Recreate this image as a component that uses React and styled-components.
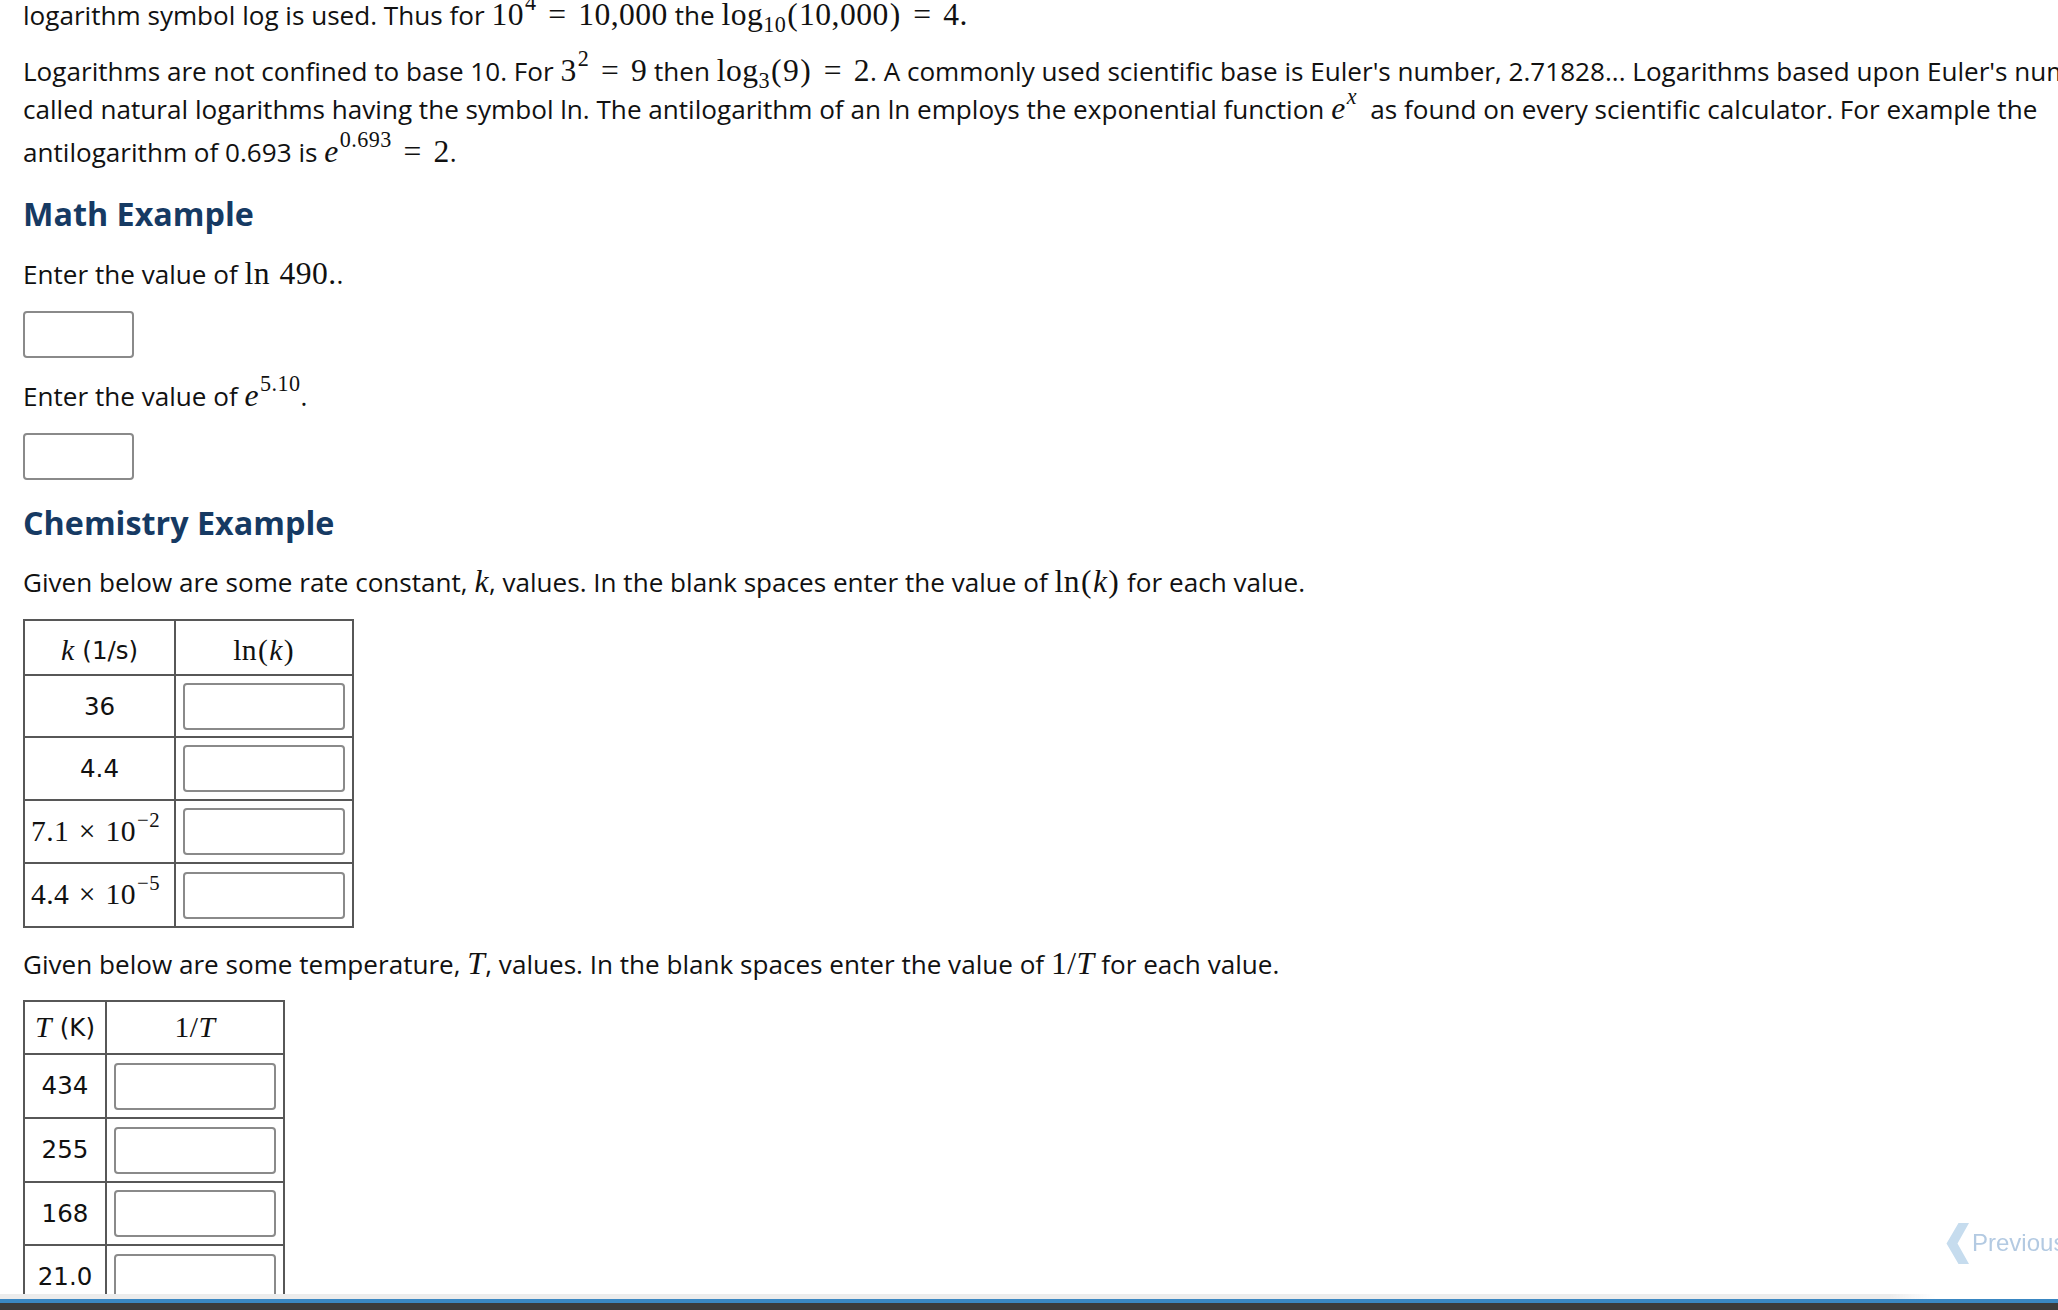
import React from "react";
import styled, { createGlobalStyle } from "styled-components";

const GlobalStyle = createGlobalStyle`
  html, body { margin: 0; padding: 0; overflow: hidden; background: #fff; }
  body { font-family: "Open Sans", "Noto Sans", sans-serif; color: #111; }
  *, *::before, *::after { box-sizing: border-box; }
`;

const Page = styled.main`
  width: 2400px;
  padding: 0 0 0 23px;
  font-size: 26.1px;
  line-height: 38.4px;
`;

const Para = styled.p`
  margin: ${(p) => (p.$first ? "-4px" : "0")} 0 17.5px;
  white-space: nowrap;
`;

const SectionTitle = styled.h2`
  margin: 23.5px 0 23px;
  font-size: 32.3px;
  line-height: 36.8px;
  font-weight: 700;
  color: #163a63;
`;

const M = styled.span`
  font-family: "Liberation Serif", "Times New Roman", serif;
  font-size: 1.21em;
  line-height: 1;
  letter-spacing: 0.015em;
  white-space: nowrap;
`;

const V = styled.i`
  font-style: italic;
`;

const Sup = styled.sup`
  font-size: 0.7em;
  line-height: ${(p) => (p.$grow ? 1 : 0)};
  vertical-align: 0.69em;
  margin-left: 0.05em;
`;

const Sub = styled.sub`
  font-size: 0.7em;
  line-height: 0;
  vertical-align: -0.32em;
`;

const Paren = styled.span`
  padding: 0 0.03em;
`;

const Rel = styled.span`
  margin: 0 0.37em;
`;

const Bin = styled.span`
  margin: 0 0.32em;
`;

const Gap = styled.span`
  display: inline-block;
  width: ${(p) => p.$w || "0.3em"};
`;

const AnswerInput = styled.input`
  display: block;
  width: ${(p) => p.$w || 111}px;
  height: 47px;
  margin: ${(p) => (p.$inCell ? "0" : "0 0 19.6px")};
  padding: 0 8px;
  border: 2px solid #8a8a8a;
  border-radius: 4px;
  background: #fff;
  font: inherit;
  font-size: 22px;
  outline: none;
`;

const Grid = styled.div`
  display: grid;
  grid-template-columns: ${(p) => p.$cols};
  grid-template-rows: ${(p) => p.$rows};
  width: max-content;
  margin: ${(p) => p.$mt || 0}px 0 ${(p) => p.$mb ?? 19.6}px;
  border-top: 2px solid #575757;
  border-left: 2px solid #575757;
  font-family: "DejaVu Sans", Verdana, sans-serif;
  font-size: 24.5px;
  line-height: 1.2;
  color: #111;
`;

const Cell = styled.div`
  display: flex;
  align-items: center;
  justify-content: ${(p) => (p.$left ? "flex-start" : "center")};
  padding: ${(p) => (p.$pt ? `${p.$pt}px 6px 0` : "0 6px")};
  border-right: 2px solid #575757;
  border-bottom: 2px solid #575757;
  white-space: nowrap;
`;

const BottomBar = styled.footer`
  position: fixed;
  left: 0;
  right: 0;
  bottom: 0;
  height: 16px;
  display: flex;
  flex-direction: column;
`;

const Shade = styled.div`
  height: 5px;
  background: linear-gradient(to right, #ececec 1890px, rgba(236, 236, 236, 0) 1935px);
`;

const Accent = styled.div`
  height: 4px;
  background: #3a87c2;
`;

const Base = styled.div`
  flex: 1;
  background: #3b3b3b;
`;

const PrevButton = styled.button`
  position: fixed;
  left: 1946px;
  top: 1223px;
  display: flex;
  align-items: center;
  gap: 2px;
  padding: 0;
  border: 0;
  background: none;
  font-family: "Liberation Sans", Arial, sans-serif;
  font-size: 24px;
  color: #b3cae2;
  white-space: nowrap;
  cursor: default;
`;

const Chevron = styled.svg`
  display: block;
  filter: blur(0.6px);
`;

const PrevLabel = styled.span`
  position: relative;
  top: -1px;
`;

const rateRows = [
  { k: "36" },
  { k: "4.4" },
  {
    k: (
      <M>
        7.1<Bin>×</Bin>10<Sup>−2</Sup>
      </M>
    ),
    left: true,
  },
  {
    k: (
      <M>
        4.4<Bin>×</Bin>10<Sup>−5</Sup>
      </M>
    ),
    left: true,
  },
];

const tempRows = ["434", "255", "168", "21.0"];

export default function App() {
  return (
    <>
      <GlobalStyle />
      <Page>
        <Para $first>
          logarithm symbol log is used. Thus for{" "}
          <M>
            10<Sup>4</Sup>
            <Rel>=</Rel>10,000
          </M>{" "}
          the{" "}
          <M>
            log<Sub>10</Sub>
            <Paren>(</Paren>10,000<Paren>)</Paren>
            <Rel>=</Rel>4.
          </M>
        </Para>

        <Para>
          Logarithms are not confined to base 10. For{" "}
          <M>
            3<Sup>2</Sup>
            <Rel>=</Rel>9
          </M>{" "}
          then{" "}
          <M>
            log<Sub>3</Sub>
            <Paren>(</Paren>9<Paren>)</Paren>
            <Rel>=</Rel>2
          </M>
          . A commonly used scientific base is Euler's number, 2.71828... Logarithms based upon Euler's number are
          <br />
          called natural logarithms having the symbol ln. The antilogarithm of an ln employs the exponential function{" "}
          <M>
            <V>e</V>
            <Sup>
              <V>x</V>
            </Sup>
          </M>
          <Gap $w="0.25em" /> as found on every scientific calculator. For example the
          <br />
          antilogarithm of 0.693 is{" "}
          <M>
            <V>e</V>
            <Sup $grow>0.693</Sup>
            <Rel>=</Rel>2
          </M>
          .
        </Para>

        <SectionTitle>Math Example</SectionTitle>

        <Para>
          Enter the value of{" "}
          <M>
            ln
            <Gap />
            490.
          </M>
          .
        </Para>
        <AnswerInput type="text" aria-label="ln 490" />

        <Para>
          Enter the value of{" "}
          <M>
            <V>e</V>
            <Sup>5.10</Sup>
          </M>
          .
        </Para>
        <AnswerInput type="text" aria-label="e^5.10" />

        <SectionTitle>Chemistry Example</SectionTitle>

        <Para>
          Given below are some rate constant,{" "}
          <M>
            <V>k</V>
          </M>
          , values. In the blank spaces enter the value of{" "}
          <M>
            ln<Paren>(</Paren>
            <V>k</V>
            <Paren>)</Paren>
          </M>{" "}
          for each value.
        </Para>

        <Grid $mb={17} $cols="151px 178px" $rows="55px 62px 63px 63px 64px">
          <Cell $pt={6}>
            <M>
              <V>k</V>
            </M>
            &nbsp;(1/s)
          </Cell>
          <Cell $pt={6}>
            <M>
              ln<Paren>(</Paren>
              <V>k</V>
              <Paren>)</Paren>
            </M>
          </Cell>
          {rateRows.map((r, i) => (
            <React.Fragment key={i}>
              <Cell $left={r.left}>{r.k}</Cell>
              <Cell>
                <AnswerInput $inCell $w={162} type="text" aria-label={`ln k row ${i + 1}`} />
              </Cell>
            </React.Fragment>
          ))}
        </Grid>

        <Para>
          Given below are some temperature,{" "}
          <M>
            <V>T</V>
          </M>
          , values. In the blank spaces enter the value of{" "}
          <M>
            1/<V>T</V>
          </M>{" "}
          for each value.
        </Para>

        <Grid $mt={-1} $cols="82px 178px" $rows="53px 64px 64px 63px 64px">
          <Cell>
            <M>
              <V>T</V>
            </M>
            &nbsp;(K)
          </Cell>
          <Cell>
            <M>
              1/<V>T</V>
            </M>
          </Cell>
          {tempRows.map((t, i) => (
            <React.Fragment key={t}>
              <Cell>{t}</Cell>
              <Cell>
                <AnswerInput $inCell $w={162} type="text" aria-label={`1/T row ${i + 1}`} />
              </Cell>
            </React.Fragment>
          ))}
        </Grid>
      </Page>

      <PrevButton type="button" disabled>
        <Chevron width="24" height="41" viewBox="0 0 24 41">
          <polygon points="23,0 12.5,0 0.5,20.5 12.5,41 23,41 11.5,20.5" fill="#c6dcee" />
        </Chevron>
        <PrevLabel>Previous</PrevLabel>
      </PrevButton>

      <BottomBar>
        <Shade />
        <Accent />
        <Base />
      </BottomBar>
    </>
  );
}
